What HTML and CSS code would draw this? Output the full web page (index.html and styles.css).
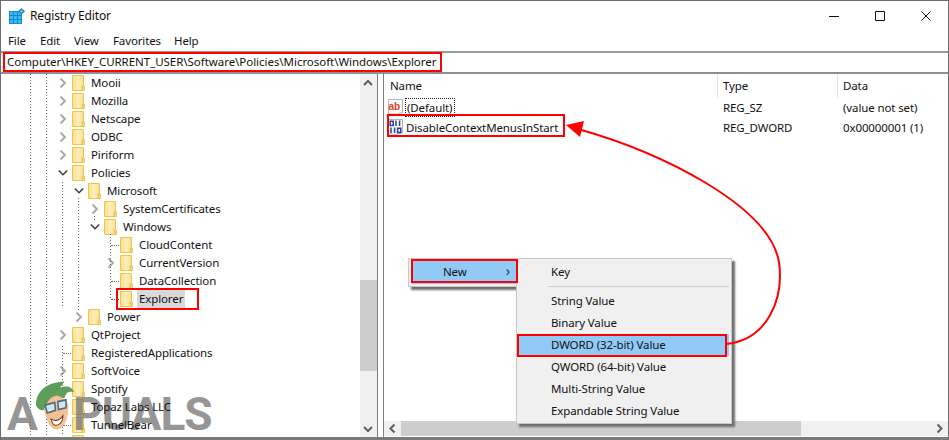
FILE: index.html
```html
<!DOCTYPE html>
<html lang="en">
<head>
<meta charset="utf-8">
<title>Registry Editor</title>
<link rel="stylesheet" href="styles.css">
</head>
<body>
<svg class="defs" width="0" height="0" aria-hidden="true">
  <defs>
    <linearGradient id="fg" x1="0" y1="0" x2="1" y2="0">
      <stop offset="0" stop-color="#fbe08a"/>
      <stop offset=".5" stop-color="#fdeeb8"/>
      <stop offset="1" stop-color="#fbe08f"/>
    </linearGradient>
    <symbol id="folder" viewBox="0 0 13 16">
      <path d="M.5.5H11.5V15.5H.5Z" fill="url(#fg)" stroke="#eac659"/>
      <path d="M10 11H12.5V15.5H10Z" fill="#f3d36f" stroke="#e8c04c" stroke-width=".8"/>
    </symbol>
    <symbol id="closed" viewBox="0 0 8 12">
      <path d="M1.5 1.5L6 6L1.5 10.5" fill="none" stroke="#a6a6a6" stroke-width="1.8"/>
    </symbol>
    <symbol id="open" viewBox="0 0 10 8">
      <path d="M.8 1.5L5 5.7L9.2 1.5" fill="none" stroke="#404040" stroke-width="1.6"/>
    </symbol>
  </defs>
</svg>
<div class="window">
  <header class="titlebar">
    <svg class="appicon" width="16" height="16" viewBox="0 0 16 16">
      <path d="M0 3H13V16H0Z" fill="#1a80c4"/>
      <path d="M.8 3.8H4V7H.8ZM4.9 3.8H8.1V7H4.9ZM9 3.8H12.2V7H9ZM.8 7.9H4V11.1H.8ZM4.9 7.9H8.1V11.1H4.9ZM9 7.9H12.2V11.1H9ZM.8 12H4V15.2H.8ZM4.9 12H8.1V15.2H4.9ZM9 12H12.2V15.2H9Z" fill="#32bdf6"/>
      <path d="M12.5 0L16 3.3L12.5 6.6L9 3.3Z" fill="#1a80c4"/>
      <path d="M12.5 1.8L14 3.3L12.5 4.8L11 3.3Z" fill="#7fdcfa"/>
    </svg>
    <span class="apptitle">Registry Editor</span>
    <div class="controls">
      <svg width="12" height="12" viewBox="0 0 12 12"><path d="M1 6.5H11" stroke="#111" fill="none"/></svg>
      <svg width="12" height="12" viewBox="0 0 12 12"><path d="M1.5 1.5H10.5V10.5H1.5Z" stroke="#111" fill="none"/></svg>
      <svg width="12" height="12" viewBox="0 0 12 12"><path d="M1.5 1.5L10.5 10.5M10.5 1.5L1.5 10.5" stroke="#111" fill="none"/></svg>
    </div>
  </header>
  <nav class="menubar">
    <span class="m-file">File</span><span class="m-edit">Edit</span><span class="m-view">View</span><span class="m-fav">Favorites</span><span>Help</span>
  </nav>
  <div class="address">Computer\HKEY_CURRENT_USER\Software\Policies\Microsoft\Windows\Explorer</div>
  <main class="panes">
    <section class="treepane">
      <div class="tree">
        <div class="row d0"><span class="exp"><svg class="ch"><use href="#closed"/></svg></span><svg class="fo"><use href="#folder"/></svg><span class="lbl">Mooii</span></div>
        <div class="row d0"><span class="exp"><svg class="ch"><use href="#closed"/></svg></span><svg class="fo"><use href="#folder"/></svg><span class="lbl">Mozilla</span></div>
        <div class="row d0"><span class="exp"><svg class="ch"><use href="#closed"/></svg></span><svg class="fo"><use href="#folder"/></svg><span class="lbl">Netscape</span></div>
        <div class="row d0"><span class="exp"><svg class="ch"><use href="#closed"/></svg></span><svg class="fo"><use href="#folder"/></svg><span class="lbl">ODBC</span></div>
        <div class="row d0"><span class="exp"><svg class="ch"><use href="#closed"/></svg></span><svg class="fo"><use href="#folder"/></svg><span class="lbl">Piriform</span></div>
        <div class="row d0"><span class="exp"><svg class="cho"><use href="#open"/></svg></span><svg class="fo"><use href="#folder"/></svg><span class="lbl">Policies</span></div>
        <div class="row d1"><span class="exp"><svg class="cho"><use href="#open"/></svg></span><svg class="fo"><use href="#folder"/></svg><span class="lbl">Microsoft</span></div>
        <div class="row d2"><span class="exp"><svg class="ch"><use href="#closed"/></svg></span><svg class="fo"><use href="#folder"/></svg><span class="lbl">SystemCertificates</span></div>
        <div class="row d2"><span class="exp"><svg class="cho"><use href="#open"/></svg></span><svg class="fo"><use href="#folder"/></svg><span class="lbl">Windows</span></div>
        <div class="row d3"><span class="exp leaf"></span><svg class="fo"><use href="#folder"/></svg><span class="lbl">CloudContent</span></div>
        <div class="row d3"><span class="exp"><svg class="ch"><use href="#closed"/></svg></span><svg class="fo"><use href="#folder"/></svg><span class="lbl">CurrentVersion</span></div>
        <div class="row d3"><span class="exp leaf"></span><svg class="fo"><use href="#folder"/></svg><span class="lbl">DataCollection</span></div>
        <div class="row d3"><span class="exp leaf"></span><svg class="fo"><use href="#folder"/></svg><span class="lbl selected">Explorer</span></div>
        <div class="row d1"><span class="exp"><svg class="ch"><use href="#closed"/></svg></span><svg class="fo"><use href="#folder"/></svg><span class="lbl">Power</span></div>
        <div class="row d0"><span class="exp"><svg class="ch"><use href="#closed"/></svg></span><svg class="fo"><use href="#folder"/></svg><span class="lbl">QtProject</span></div>
        <div class="row d0"><span class="exp leaf"></span><svg class="fo"><use href="#folder"/></svg><span class="lbl">RegisteredApplications</span></div>
        <div class="row d0"><span class="exp"><svg class="ch"><use href="#closed"/></svg></span><svg class="fo"><use href="#folder"/></svg><span class="lbl">SoftVoice</span></div>
        <div class="row d0"><span class="exp"></span><svg class="fo"><use href="#folder"/></svg><span class="lbl">Spotify</span></div>
        <div class="row d0"><span class="exp"></span><svg class="fo"><use href="#folder"/></svg><span class="lbl">Topaz Labs LLC</span></div>
        <div class="row d0"><span class="exp leaf"></span><svg class="fo"><use href="#folder"/></svg><span class="lbl">TunnelBear</span></div>
        <div class="row d0"><span class="exp"></span><svg class="fo"><use href="#folder"/></svg></div>
      </div>
      <svg class="guides" width="360" height="362" viewBox="0 74 360 362">
        <path d="M30.5 74V436M46.5 74V436M62.5 182V308M62.5 346V436M78.5 198V312M94.5 216V222M110.5 234V299" fill="none" stroke="#6a6a6a" stroke-dasharray="1 2"/>
      </svg>
      <div class="vscroll">
        <svg class="arrow" width="16" height="16" viewBox="0 0 16 16"><path d="M4 10L8 6L12 10" fill="none" stroke="#606060" stroke-width="2"/></svg>
        <div class="vtrack"><div class="vthumb"></div></div>
        <svg class="arrow" width="16" height="16" viewBox="0 0 16 16"><path d="M4 6L8 10L12 6" fill="none" stroke="#606060" stroke-width="2"/></svg>
      </div>
    </section>
    <section class="listpane">
      <div class="listhead">
        <span class="col-name">Name</span><span class="col-type">Type</span><span class="col-data">Data</span>
      </div>
      <div class="listrow">
        <span class="col-name namecell">
          <svg class="regicon" width="15" height="17" viewBox="0 0 15 17"><path d="M.5.5H14.5V14C12 13 10 15.5 7.5 15.5S3 14 .5 15Z" fill="#fff" stroke="#b5b5b5"/><text x="0.5" y="10.5" class="abtext">ab</text></svg>
          <span class="focus">(Default)</span>
        </span><span class="col-type">REG_SZ</span><span class="col-data">(value not set)</span>
      </div>
      <div class="listrow">
        <span class="col-name namecell">
          <svg class="regicon" width="15" height="17" viewBox="0 0 15 17"><path d="M.5.5H14.5V14C12 13 10 15.5 7.5 15.5S3 14 .5 15Z" fill="#fff" stroke="#b5b5b5"/><path d="M2.2 2.2H5.2V6.6H2.2ZM8 1.6V7M11.6 1.6V7M3 8.6V14M6.6 8.6V14M9.6 9.2H12.8V13.6H9.6Z" fill="none" stroke="#24409c" stroke-width="1.5"/></svg>
          <span>DisableContextMenusInStart</span>
        </span><span class="col-type">REG_DWORD</span><span class="col-data">0x00000001 (1)</span>
      </div>
      <div class="hscroll">
        <svg class="arrow" width="17" height="15" viewBox="0 0 17 15"><path d="M10.5 3.5L6.5 7.5L10.5 11.5" fill="none" stroke="#606060" stroke-width="2"/></svg>
        <div class="htrack"><div class="hthumb"></div></div>
        <svg class="arrow" width="17" height="15" viewBox="0 0 17 15"><path d="M6.5 3.5L10.5 7.5L6.5 11.5" fill="none" stroke="#606060" stroke-width="2"/></svg>
      </div>
    </section>
  </main>
  <div class="statusedge"></div>

  <div class="menu menu-new">
    <div class="menuitem hot new"><span>New</span><span class="sub">›</span></div>
  </div>
  <div class="menu menu-sub">
    <div class="menuitem">Key</div>
    <div class="menusep"></div>
    <div class="menuitem">String Value</div>
    <div class="menuitem">Binary Value</div>
    <div class="menuitem hot">DWORD (32-bit) Value</div>
    <div class="menuitem">QWORD (64-bit) Value</div>
    <div class="menuitem">Multi-String Value</div>
    <div class="menuitem">Expandable String Value</div>
  </div>

  <div class="mark mark-address"></div>
  <div class="mark mark-explorer"></div>
  <div class="mark mark-value"></div>
  <div class="mark mark-new"></div>
  <div class="mark mark-dword"></div>
  <svg class="arrowline" width="949" height="440" viewBox="0 0 949 440">
    <path d="M726 344C768 340 784 298 779 262C769 205 660 152 578 129" fill="none" stroke="#f00" stroke-width="2"/>
    <path d="M566 125L584 121L580 137Z" fill="#f00"/>
  </svg>

  <div class="watermark">
    <span class="wm wm-a">A</span>
    <span class="wm wm-rest">PUALS</span>
    <svg class="mascot" width="42" height="54" viewBox="0 0 56 62" preserveAspectRatio="none">
      <path d="M12 24C16 42 20 56 30 58C42 58 48 44 47 28L30 14Z" fill="#f3c193"/>
      <path d="M4 30C4 14 18 4 42 3L36 10C46 7 52 9 55 15C46 14 44 16 42 22L32 19C24 20 20 24 14 36C10 36 6 34 4 30Z" fill="#5c9e5a"/>
      <path d="M16 30L29 27L30 36L19 39ZM33 26L44 24L44 33L34 35Z" fill="#cfe6f2" stroke="#4a6a80" stroke-width="2"/>
      <path d="M24 46C30 49 36 47 40 42C40 50 34 54 29 53C26 52 25 49 24 46Z" fill="#fff" stroke="#6b3f2a" stroke-width="1.2"/>
    </svg>
  </div>
</div>
</body>
</html>
```
FILE: styles.css
```css
* { box-sizing: border-box; }
html, body { margin: 0; padding: 0; background: #fff; }
body { width: 949px; height: 440px; overflow: hidden; font-family: "Noto Sans", sans-serif; font-size: 11.5px; letter-spacing: -0.12px; color: #111; }
.defs { position: absolute; }
.window { position: relative; width: 949px; height: 440px; display: flex; flex-direction: column; border: 1px solid #6d6d6d; border-width: 1px 1px 0 1px; overflow: hidden; background: #fff; }

.titlebar { height: 29px; flex: none; display: flex; align-items: center; padding-left: 8px; }
.appicon { margin-right: 5px; }
.apptitle { font-size: 12px; }
.controls { margin-left: auto; display: flex; gap: 34px; padding-right: 16px; }

.menubar { height: 21px; flex: none; display: flex; align-items: center; padding-left: 7px; }
.m-file { width: 32px; }
.m-edit { width: 34px; }
.m-view { width: 39px; }
.m-fav { width: 61px; }

.address { height: 23px; flex: none; border-top: 2px solid #9a9a9a; border-bottom: 2px solid #8f8f8f; padding-left: 6px; line-height: 18px; white-space: nowrap; letter-spacing: -0.04px; }

.panes { flex: 1; min-height: 0; display: flex; overflow: hidden; }
.treepane { position: relative; width: 377px; flex: none; min-height: 0; overflow: hidden; display: flex; border-right: 1px solid #808080; }
.tree { width: 359px; flex: none; overflow: hidden; }
.row { height: 18px; display: flex; align-items: center; white-space: nowrap; }
.d0 { padding-left: 55px; }
.d1 { padding-left: 71px; }
.d2 { padding-left: 87px; }
.d3 { padding-left: 103px; }
.exp { width: 16px; height: 18px; flex: none; display: flex; align-items: center; padding-left: 3px; }
.ch { width: 8px; height: 12px; }
.cho { width: 10px; height: 8px; margin-left: -1px; }
.leaf::after { content: ""; width: 8px; margin-left: 4px; border-top: 1px dotted #6a6a6a; }
.fo { width: 13px; height: 16px; flex: none; }
.lbl { position: relative; z-index: 3; margin-left: 4px; padding: 0 2px; line-height: 18px; }
.selected { background: #d9d9d9; }
.guides { position: absolute; left: -1px; top: 0; pointer-events: none; }

.vscroll { width: 17px; flex: none; background: #f0f0f0; display: flex; flex-direction: column; margin-left: auto; }
.vscroll .arrow { flex: none; margin-top: 1px; }
.vtrack { flex: 1; display: flex; flex-direction: column; justify-content: flex-end; padding-bottom: 49px; }
.vthumb { height: 91px; background: #cdcdcd; }

.listpane { flex: 1; min-width: 0; margin-left: 5px; display: flex; flex-direction: column; border-left: 1px solid #808080; }
.listhead { height: 23px; flex: none; display: flex; align-items: flex-start; }
.listhead .col-name { padding-left: 6px; }
.listhead span { height: 24px; line-height: 24px; }
.listhead .col-type, .listhead .col-data { border-left: 1px solid #e5e5e5; padding-left: 5px; }
.col-name { width: 333px; flex: none; }
.col-type { width: 120px; flex: none; padding-left: 6px; }
.col-data { flex: 1; padding-left: 6px; }
.listrow { height: 20px; flex: none; display: flex; align-items: center; white-space: nowrap; }
.namecell { display: flex; align-items: center; padding-left: 4px; }
.regicon { flex: none; margin-right: 3px; }
.abtext { font-family: "Liberation Sans", sans-serif; font-size: 10px; font-weight: 700; fill: #d9401a; letter-spacing: 0; }
.focus { outline: 1px dotted #222; padding: 0 2px 0 1px; line-height: 17px; }

.hscroll { margin-top: auto; height: 15px; flex: none; display: flex; background: #f0f0f0; margin-bottom: 1px; }
.hscroll .arrow { flex: none; }
.htrack { flex: 1; }
.hthumb { width: 400px; height: 15px; background: #cdcdcd; }
.statusedge { height: 3px; flex: none; background: #7a7a7a; }

.menu { position: absolute; background: #f0f0f0; border: 1px solid #c8c8c8; box-shadow: 3px 3px 2px #6e6e6e; }
.menu-new { left: 407px; top: 257px; width: 109px; height: 29px; padding: 1px 0 0 3px; }
.menu-sub { left: 515px; top: 257px; width: 216px; height: 166px; padding: 2px 2px 0 2px; }
.menuitem { height: 22px; line-height: 22px; padding-left: 32px; white-space: nowrap; }
.menusep { height: 1px; margin: 3px 0 3px 29px; background: #cfcfcf; }
.hot { background: #91c9f7; }
.new { height: 24px; display: flex; padding-left: 31px; padding-right: 6px; line-height: 24px; }
.sub { margin-left: auto; font-size: 14px; line-height: 21px; color: #333; }

.mark { position: absolute; border: 2px solid #f00; pointer-events: none; }
.mark-address { left: 2px; top: 51px; width: 439px; height: 20px; }
.mark-explorer { left: 115px; top: 287px; width: 83px; height: 22px; }
.mark-value { left: 386px; top: 113px; width: 178px; height: 23px; }
.mark-new { left: 410px; top: 258px; width: 107px; height: 24px; }
.mark-dword { left: 516px; top: 333px; width: 210px; height: 23px; }
.arrowline { position: absolute; left: -1px; top: -1px; pointer-events: none; }

.watermark { position: absolute; left: 0; top: 370px; width: 220px; height: 70px; pointer-events: none; z-index: 1; }
.wm { position: absolute; top: 15px; font-family: Roboto, sans-serif; font-weight: 700; font-size: 46px; line-height: 56px; letter-spacing: -1px; color: rgba(110,110,110,.72); }
.wm-a { left: 6px; }
.wm-rest { left: 72px; }
.mascot { position: absolute; left: 32px; top: 8px; }
```
